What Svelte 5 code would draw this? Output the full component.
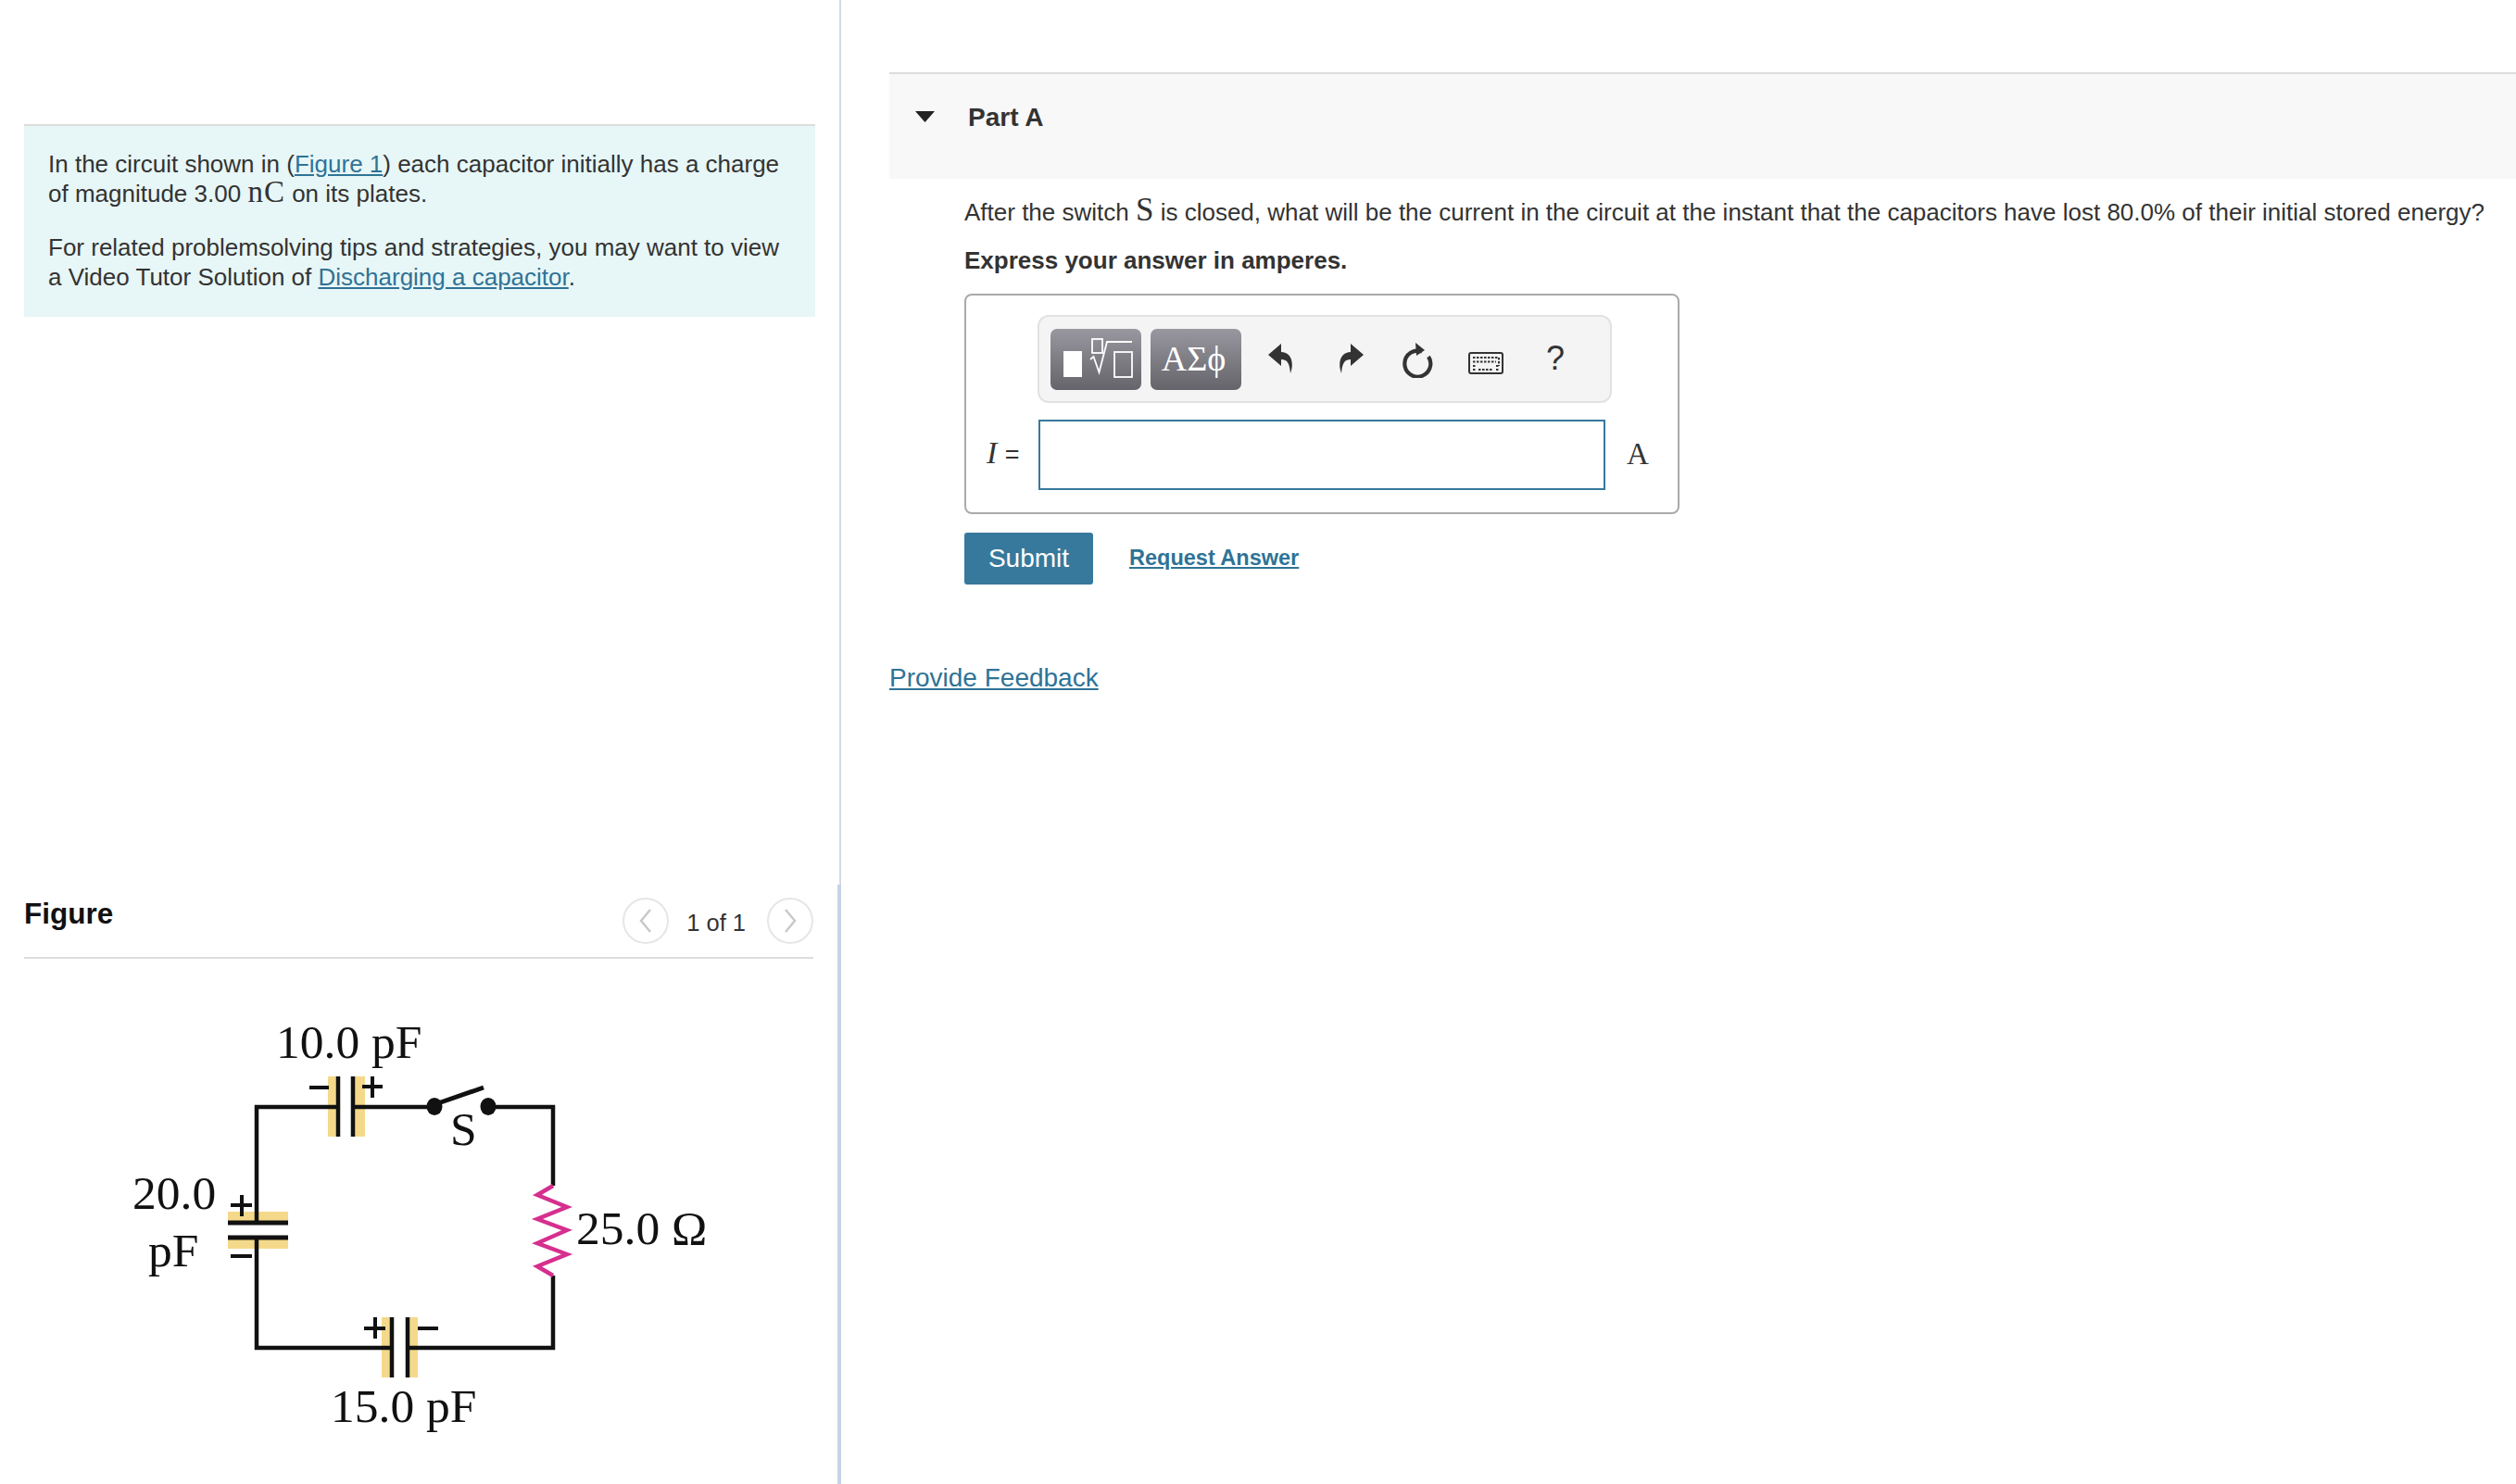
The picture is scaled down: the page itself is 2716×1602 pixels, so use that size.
<script>
  const fs = 51.5;
</script>

<div class="page">
  <aside class="left">
    <section class="intro">
      <p>In the circuit shown in (<a href="#f">Figure 1</a>) each capacitor initially has a charge of magnitude 3.00 <span class="math">nC</span> on its plates.</p>
      <p>For related problemsolving tips and strategies, you may want to view a Video Tutor Solution of <a href="#d">Discharging a capacitor</a>.</p>
    </section>

    <header class="fig-head">
      <h2>Figure</h2>
      <div class="pager">
        <span class="circle">
          <svg width="16" height="28" viewBox="0 0 16 28"><path d="M13 2 3 14l10 12" fill="none" stroke="#c9c9c9" stroke-width="2.5"/></svg>
        </span>
        <span class="count">1 of 1</span>
        <span class="circle">
          <svg width="16" height="28" viewBox="0 0 16 28"><path d="M3 2l10 12L3 26" fill="none" stroke="#c9c9c9" stroke-width="2.5"/></svg>
        </span>
      </div>
    </header>

    <svg class="circuit" width="880" height="567" viewBox="0 1035 880 567">
      <g fill="#f4d98a">
        <rect x="354" y="1162" width="12" height="65"/><rect x="381" y="1162" width="13" height="65"/>
        <rect x="412" y="1422" width="12" height="65"/><rect x="439" y="1422" width="12" height="65"/>
        <rect x="246" y="1308" width="65" height="12"/><rect x="246" y="1336" width="65" height="12"/>
      </g>
      <g fill="none" stroke="#111" stroke-width="4.500">
        <path d="M365 1195H277V1320M277 1336V1455H423M440 1455H597V1377M597 1280V1195H527M381 1195H469"/>
        <path d="M365 1162v65M381 1162v65M423 1422v65M440 1422v65"/>
        <path d="M246 1320h65M246 1336h65" stroke-width="5"/>
        <path d="M334 1174h21M391 1173h22M402 1162v23M393 1434h23M405 1422v23M451 1434h22M249 1301h23M261 1290v23M249 1356h23" stroke-width="4"/>
        <path d="M470 1192 522 1174" stroke-width="5"/>
      </g>
      <ellipse cx="469" cy="1194.500" rx="8.500" ry="9.500" fill="#111"/>
      <ellipse cx="527" cy="1194.500" rx="8.500" ry="9.500" fill="#111"/>
      <path d="M597 1280 580 1290 612 1303 580 1316 612 1328 580 1342 612 1354 580 1367 597 1377" fill="none" stroke="#d62f8e" stroke-width="4.500"/>
      <g class="label" font-size={fs}>
        <text x="298" y="1142">10.0 pF</text>
        <text x="143" y="1305">20.0</text>
        <text x="160" y="1367">pF</text>
        <text x="622" y="1343">25.0 Ω</text>
        <text x="357" y="1535">15.0 pF</text>
        <text x="486" y="1236">S</text>
      </g>
    </svg>
  </aside>

  <main class="right">
    <header class="part">
      <svg width="21" height="12" viewBox="0 0 21 12"><path d="M0 0h21L10.500 12z" fill="#222"/></svg>
      <h3>Part A</h3>
    </header>

    <div class="body">
      <p class="question">After the switch <span class="math big">S</span> is closed, what will be the current in the circuit at the instant that the capacitors have lost 80.0% of their initial stored energy?</p>
      <p class="express">Express your answer in amperes.</p>

      <div class="answer">
        <div class="toolbar">
          <span class="tbtn first">
            <svg width="98" height="66" viewBox="0 0 98 66">
              <rect x="14" y="24" width="20" height="28" fill="#fff"/>
              <g fill="none" stroke="#fff" stroke-width="1.800">
                <rect x="45" y="11" width="11" height="15"/>
                <rect x="69" y="25" width="19" height="27"/>
                <path d="M43 33l3.500-3 6 17 8.500-33h27"/>
              </g>
            </svg>
          </span>
          <span class="tbtn greek">ΑΣϕ</span>
          <span class="icons">
            <svg class="ic undo" width="28" height="32" viewBox="0 0 28 32"><path d="M14 0 0 12l14 12v-7c6 0 9 3 10 15 5-14-1-23-10-23z" fill="#333"/></svg>
            <svg class="ic redo" width="28" height="32" viewBox="0 0 28 32"><path d="M14 0 28 12 14 24v-7C8 17 5 20 4 32-1 18 5 9 14 9z" fill="#333"/></svg>
            <svg class="ic refresh" width="34" height="38" viewBox="0 0 34 38">
              <path d="M22 9.500A14 14 0 1 0 29 15" fill="none" stroke="#333" stroke-width="4.200"/>
              <path d="M15 0 25 8 16 14z" fill="#333"/>
            </svg>
            <svg class="ic kbd" width="38" height="24" viewBox="0 0 38 24">
              <rect x="1" y="1" width="36" height="22" rx="2" fill="none" stroke="#333" stroke-width="2"/>
              <path d="M5 6h27M5 10.500h25M5 15h3M30 15h3M5 19h3M11 19h16M30 19h3M33 6v9" stroke="#333" stroke-width="2" stroke-dasharray="2.500 1.500" fill="none"/>
            </svg>
            <span class="help">?</span>
          </span>
        </div>
        <div class="entry">
          <span class="var"><i>I</i> <span>=</span></span>
          <div class="field"></div>
          <span class="unit">A</span>
        </div>
      </div>

      <div class="actions">
        <button type="button">Submit</button>
        <a class="req" href="#r">Request Answer</a>
      </div>
    </div>

    <a class="feedback" href="#p">Provide Feedback</a>
  </main>
</div>

<style>
  :global(body) { margin: 0; background: #fff; }
  .page {
    display: flex;
    width: 2716px;
    height: 1602px;
    overflow: hidden;
    font-family: "Liberation Sans", Arial, sans-serif;
    font-size: 26px;
    line-height: 32px;
    color: #333;
  }
  a { color: #2f7396; text-decoration: underline; }
  p { margin: 0; }
  .math { font-family: "Liberation Serif", serif; font-size: 33px; line-height: 0; letter-spacing: 1px; }
  .math.big { font-size: 35px; letter-spacing: 0; }
  .left {
    box-sizing: border-box;
    width: 908px;
    flex: none;
    padding: 134px 26px 0 26px;
    background:
      linear-gradient(#c5d4e4, #c5d4e4) 904px 955px / 4px 647px no-repeat,
      linear-gradient(#d3dbe5, #d3dbe5) 906px 0 / 2px 955px no-repeat;
  }
  .intro {
    box-sizing: border-box;
    width: 854px;
    height: 208px;
    border-top: 2px solid #ddd;
    background: #e7f6f6;
    padding: 25px 26px 0 26px;
  }
  .intro p + p { margin-top: 26px; }
  .fig-head {
    box-sizing: border-box;
    display: flex;
    justify-content: space-between;
    align-items: flex-start;
    width: 852px;
    height: 66px;
    margin-top: 627px;
    border-bottom: 2px solid #ddd;
  }
  h2 {
    margin: -1px 0 0;
    font-size: 31.500px;
    line-height: 36px;
    font-weight: 700;
    color: #111;
  }
  .pager { display: flex; align-items: center; gap: 21px; }
  .circle {
    box-sizing: border-box;
    width: 50px;
    height: 50px;
    border: 2px solid #e6e6e6;
    border-radius: 50%;
    display: flex;
    align-items: center;
    justify-content: center;
  }
  .count { font-size: 25.500px; padding-top: 4px; margin: 0 2px 0 -2px; }
  .circuit {
    display: block;
    width: 880px;
    margin-left: -26px;
    filter: blur(0.5px);
  }
  .label { font-family: "Liberation Serif", serif; fill: #111; }
  .right { flex: 1; padding: 78px 0 0 52px; min-width: 0; }
  .part {
    box-sizing: border-box;
    height: 115px;
    border-top: 2px solid #ddd;
    background: #f8f8f8;
    display: flex;
    align-items: flex-start;
    padding: 40px 0 0 28px;
  }
  .part svg { margin-right: 36px; }
  h3 { margin: -9px 0 0; font-size: 28px; line-height: 32px; font-weight: 700; color: #333; }
  .body { padding: 20px 0 0 81px; }
  .express { font-weight: 700; margin-top: 20px; }
  .answer {
    box-sizing: border-box;
    width: 772px;
    height: 238px;
    margin-top: 20px;
    border: 2px solid #aaa;
    border-radius: 8px;
    padding: 21px 0 0 77px;
  }
  .toolbar {
    box-sizing: border-box;
    width: 620px;
    height: 95px;
    border: 2px solid #e2e2e2;
    border-radius: 12px;
    background: #f4f4f4;
    display: flex;
    align-items: flex-start;
    padding: 13px 0 0 12px;
    gap: 10px;
  }
  .tbtn {
    box-sizing: border-box;
    width: 98px;
    height: 66px;
    border-radius: 7px;
    background: linear-gradient(#99979f, #64646a);
    color: #fff;
    display: block;
    flex: none;
  }
  .tbtn svg { display: block; }
  .greek {
    font-family: "Liberation Serif", serif;
    font-size: 38px;
    line-height: 64px;
    text-align: center;
    padding-right: 5px;
  }
  .icons { display: flex; align-items: flex-start; }
  .ic { display: block; flex: none; }
  .undo { margin: 16px 0 0 19px; }
  .redo { margin: 16px 0 0 47px; }
  .refresh { margin: 15px 0 0 41px; }
  .kbd { margin: 25px 0 0 38px; }
  .help { font-size: 36px; line-height: 40px; margin: 12px 0 0 46px; }
  .entry { display: flex; align-items: center; margin-top: 18px; }
  .var {
    font-family: "Liberation Serif", serif;
    font-size: 34px;
    width: 77px;
    margin: -2px 1px 0 -77px;
    padding-left: 22px;
    box-sizing: border-box;
    white-space: nowrap;
  }
  .var span { font-family: "Liberation Sans", sans-serif; font-size: 27px; }
  .field {
    box-sizing: border-box;
    width: 612px;
    height: 76px;
    border: 2px solid #37799c;
    background: #fff;
  }
  .unit { font-family: "Liberation Serif", serif; font-size: 33px; margin: -3px 0 0 23px; }
  .actions { display: flex; align-items: center; margin-top: 20px; }
  button {
    width: 139px;
    height: 56px;
    border: 0;
    border-radius: 3px;
    background: #37799c;
    color: #fff;
    font: 28px/32px "Liberation Sans", sans-serif;
    padding: 0;
  }
  .req { margin: -3px 0 0 39px; font-weight: 700; font-size: 23.500px; }
  .feedback { display: inline-block; margin-top: 85px; font-size: 28px; }
</style>
